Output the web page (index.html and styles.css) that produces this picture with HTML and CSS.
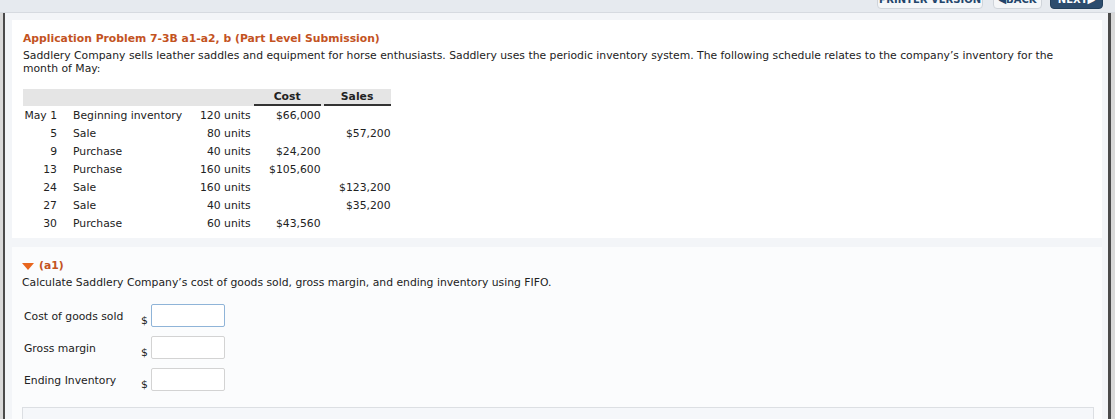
FILE: index.html
```html
<!DOCTYPE html>
<html>
<head>
<meta charset="utf-8">
<link rel="stylesheet" href="styles.css">
</head>
<body>
<div class="topbar">
  <div class="btn light printer">PRINTER VERSION</div>
  <div class="btn light back">&#9664;BACK</div>
  <div class="btn dark next">NEXT&#9654;</div>
</div>
<div class="frame">
  <div class="edge-left"></div>
  <div class="main">
    <section class="panel problem">
      <h1 class="title">Application Problem 7-3B a1-a2, b (Part Level Submission)</h1>
      <p class="intro">Saddlery Company sells leather saddles and equipment for horse enthusiasts. Saddlery uses the periodic inventory system. The following schedule relates to the company’s inventory for the month of May:</p>
      <table class="sched">
        <thead>
          <tr class="head"><th></th><th></th><th></th><th class="money"><span>Cost</span></th><th class="money"><span>Sales</span></th></tr>
        </thead>
        <tbody>
          <tr><td class="date">May 1</td><td class="desc">Beginning inventory</td><td class="units">120 units</td><td class="num">$66,000</td><td class="num"></td></tr>
          <tr><td class="date">5</td><td class="desc">Sale</td><td class="units">80 units</td><td class="num"></td><td class="num">$57,200</td></tr>
          <tr><td class="date">9</td><td class="desc">Purchase</td><td class="units">40 units</td><td class="num">$24,200</td><td class="num"></td></tr>
          <tr><td class="date">13</td><td class="desc">Purchase</td><td class="units">160 units</td><td class="num">$105,600</td><td class="num"></td></tr>
          <tr><td class="date">24</td><td class="desc">Sale</td><td class="units">160 units</td><td class="num"></td><td class="num">$123,200</td></tr>
          <tr><td class="date">27</td><td class="desc">Sale</td><td class="units">40 units</td><td class="num"></td><td class="num">$35,200</td></tr>
          <tr><td class="date">30</td><td class="desc">Purchase</td><td class="units">60 units</td><td class="num">$43,560</td><td class="num"></td></tr>
        </tbody>
      </table>
    </section>
    <section class="panel part">
      <h2 class="part-title"><span class="tri"></span>(a1)</h2>
      <p class="part-q">Calculate Saddlery Company’s cost of goods sold, gross margin, and ending inventory using FIFO.</p>
      <div class="form">
        <div class="row"><label>Cost of goods sold</label><span class="cur">$</span><input class="field focus" type="text"></div>
        <div class="row"><label>Gross margin</label><span class="cur">$</span><input class="field" type="text"></div>
        <div class="row"><label>Ending Inventory</label><span class="cur">$</span><input class="field" type="text"></div>
      </div>
      <div class="box"></div>
    </section>
  </div>
  <div class="edge-right"></div>
</div>
</body>
</html>
```

FILE: styles.css
```css
html, body {
  margin: 0;
  padding: 0;
  height: 419px;
  overflow: hidden;
  background: #f3f5f8;
  font-family: Verdana, "DejaVu Sans", sans-serif;
  font-size: 10.8px;
  color: #222;
}
.topbar {
  height: 13px;
  background: #e6eaef;
  border-bottom: 1px solid #d6dae0;
  box-sizing: border-box;
  display: flex;
  align-items: flex-end;
  justify-content: flex-end;
  gap: 8px;
  padding-right: 12px;
  padding-bottom: 3px;
  overflow: hidden;
}
.btn {
  flex: none;
  height: 22px;
  line-height: 24px;
  font-size: 10px;
  font-weight: bold;
  text-align: center;
  border-radius: 0 0 4px 4px;
  box-sizing: border-box;
}
.btn.light {
  background: #f4f6f8;
  border: 1px solid #cfd4da;
  color: #23456b;
}
.btn.dark {
  background: #2d4d6e;
  color: #fff;
  border: 1px solid #23405c;
}
.printer { width: 106px; margin-right: 2px; }
.back { width: 49px; }
.next { width: 53px; }
.frame {
  display: flex;
  height: 406px;
}
.edge-left {
  flex: none;
  width: 3px;
  background: #d9d9d9;
  border-right: 2px solid #4a4a4a;
}
.edge-right {
  flex: none;
  width: 4px;
  border-left: 3px solid #4a4a4a;
  background: #d9d9d9;
}
.main {
  flex: 1;
  min-width: 0;
  padding: 7px 6px 0 7px;
  display: flex;
  flex-direction: column;
  gap: 9px;
  overflow: hidden;
}
.panel {
  background: #fff;
}
.problem {
  flex: none;
  height: 218px;
  padding: 12px 0 0 11px;
  box-sizing: border-box;
}
.title {
  margin: 0;
  font-size: 10.8px;
  font-weight: bold;
  color: #c3531f;
  line-height: 14px;
}
.intro {
  margin: 3px 0 0 0;
  line-height: 13px;
  padding-right: 22px;
}
.sched {
  margin-top: 14px;
  border-collapse: collapse;
}
.sched th, .sched td {
  padding: 0;
  height: 18px;
  white-space: nowrap;
}
.sched .head th {
  background: #e5e5e5;
  height: 17px;
  font-weight: bold;
  vertical-align: bottom;
}
.sched .head th.money span {
  display: block;
  border-bottom: 2px solid #333;
  margin-left: 3px;
  line-height: 15px;
  text-align: center;
}
.date { text-align: right; width: 34px; padding-right: 16px !important; }
.desc { width: 127px; }
.units { text-align: right; width: 50px; }
.num { text-align: right; }
td.num:nth-child(4) { width: 70px; }
td.num:nth-child(5) { width: 70px; }
.part {
  flex: 1;
  background: #fbfcfd;
  padding: 12px 8px 0 10px;
}
.part-title {
  margin: 0;
  font-size: 10.8px;
  font-weight: bold;
  color: #c3531f;
  display: flex;
  align-items: center;
  gap: 5px;
  line-height: 14px;
}
.tri {
  width: 0;
  height: 0;
  border-left: 6px solid transparent;
  border-right: 6px solid transparent;
  border-top: 7px solid #e8661e;
}
.part-q {
  margin: 3px 0 0 0;
  line-height: 14px;
}
.form {
  margin-top: 14px;
  display: flex;
  flex-direction: column;
  gap: 9px;
}
.row {
  display: flex;
  align-items: flex-start;
  height: 23px;
}
.row label {
  width: 117px;
  padding-left: 2px;
  padding-top: 6px;
}
.cur {
  padding-top: 10px;
  width: 10px;
}
.field {
  width: 74px;
  height: 23px;
  box-sizing: border-box;
  border: 1px solid #d3d3d3;
  border-radius: 2px;
  background: #fff;
  padding: 0;
  margin: 0;
}
.field.focus {
  border-color: #8fb4d8;
}
.box {
  margin-top: 16px;
  height: 20px;
  border: 1px solid #dcdfe3;
  background: #f5f7fa;
}
```
